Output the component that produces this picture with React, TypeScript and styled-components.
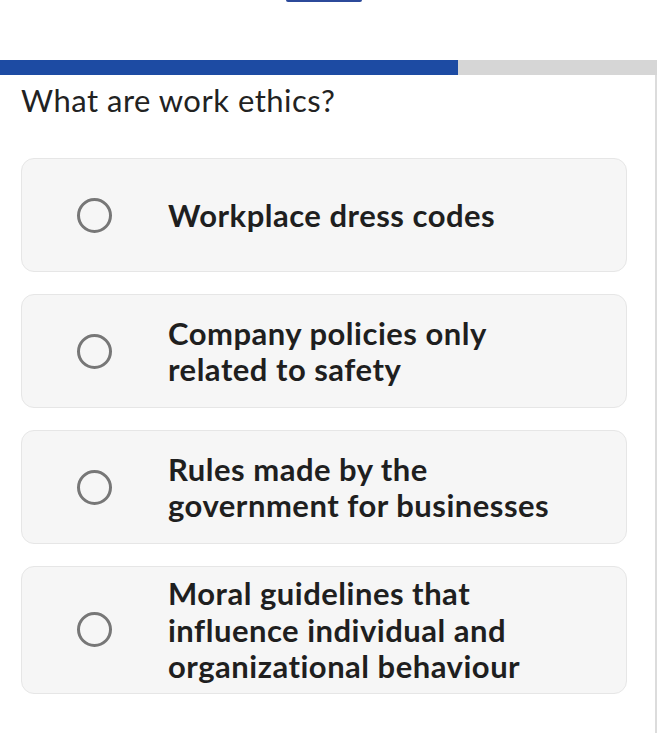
import React from "react";
import styled, { createGlobalStyle } from "styled-components";

const Global = createGlobalStyle`
  html, body { margin: 0; padding: 0; background: #ffffff; }
  body { font-family: Lato, "Open Sans", sans-serif; color: #222222; }
`;

const Page = styled.div`
  width: 662px;
  min-height: 733px;
  display: flex;
  flex-direction: column;
`;

const TopBar = styled.div`
  height: 60px;
  display: flex;
  justify-content: center;
  align-items: flex-start;
  padding-right: 14px;
  box-sizing: border-box;
`;

const TopTab = styled.div`
  width: 76px;
  height: 2px;
  background: #2c4a9a;
  border-radius: 0 0 2px 2px;
`;

const Track = styled.div`
  width: 657px;
  height: 15px;
  background: #d6d6d6;
  display: flex;
`;

const Fill = styled.div`
  height: 100%;
  background: #1d4ba3;
`;

const Content = styled.div`
  width: 657px;
  box-sizing: border-box;
  border-right: 2px solid #dcdcdc;
  padding: 7px 28px 40px 21px;
  flex: 1;
  display: flex;
  flex-direction: column;
`;

const Question = styled.h1`
  margin: 0 0 40px 0;
  font-size: 31px;
  font-weight: 400;
  line-height: 36px;
  letter-spacing: 0.5px;
  color: #222222;
`;

const Options = styled.div`
  display: flex;
  flex-direction: column;
  gap: 22px;
`;

const Option = styled.div`
  min-height: 114px;
  box-sizing: border-box;
  background: #f6f6f6;
  border: 1px solid #e6e6e6;
  border-radius: 13px;
  display: flex;
  align-items: center;
  padding: 8px 20px 8px 55px;
`;

const Radio = styled.span`
  flex: none;
  width: 35px;
  height: 35px;
  box-sizing: border-box;
  border: 3.5px solid #777777;
  border-radius: 50%;
  margin-right: 56px;
`;

const Label = styled.span`
  font-size: 31px;
  font-weight: 700;
  line-height: 36.5px;
  letter-spacing: 0.5px;
  color: #1f1f1f;
`;

const options = [
  ["Workplace dress codes"],
  ["Company policies only", "related to safety"],
  ["Rules made by the", "government for businesses"],
  ["Moral guidelines that", "influence individual and", "organizat\u200Cional behaviour"],
];

export default function App() {
  return (
    <Page>
      <Global />
      <TopBar>
        <TopTab />
      </TopBar>
      <Track>
        <Fill style={{ width: `${(458 / 657) * 100}%` }} />
      </Track>
      <Content>
        <Question>What are work ethics?</Question>
        <Options>
          {options.map((lines, i) => (
            <Option key={i}>
              <Radio />
              <Label>
                {lines.map((l, j) => (
                  <React.Fragment key={j}>
                    {j > 0 && <br />}
                    {l}
                  </React.Fragment>
                ))}
              </Label>
            </Option>
          ))}
        </Options>
      </Content>
    </Page>
  );
}
